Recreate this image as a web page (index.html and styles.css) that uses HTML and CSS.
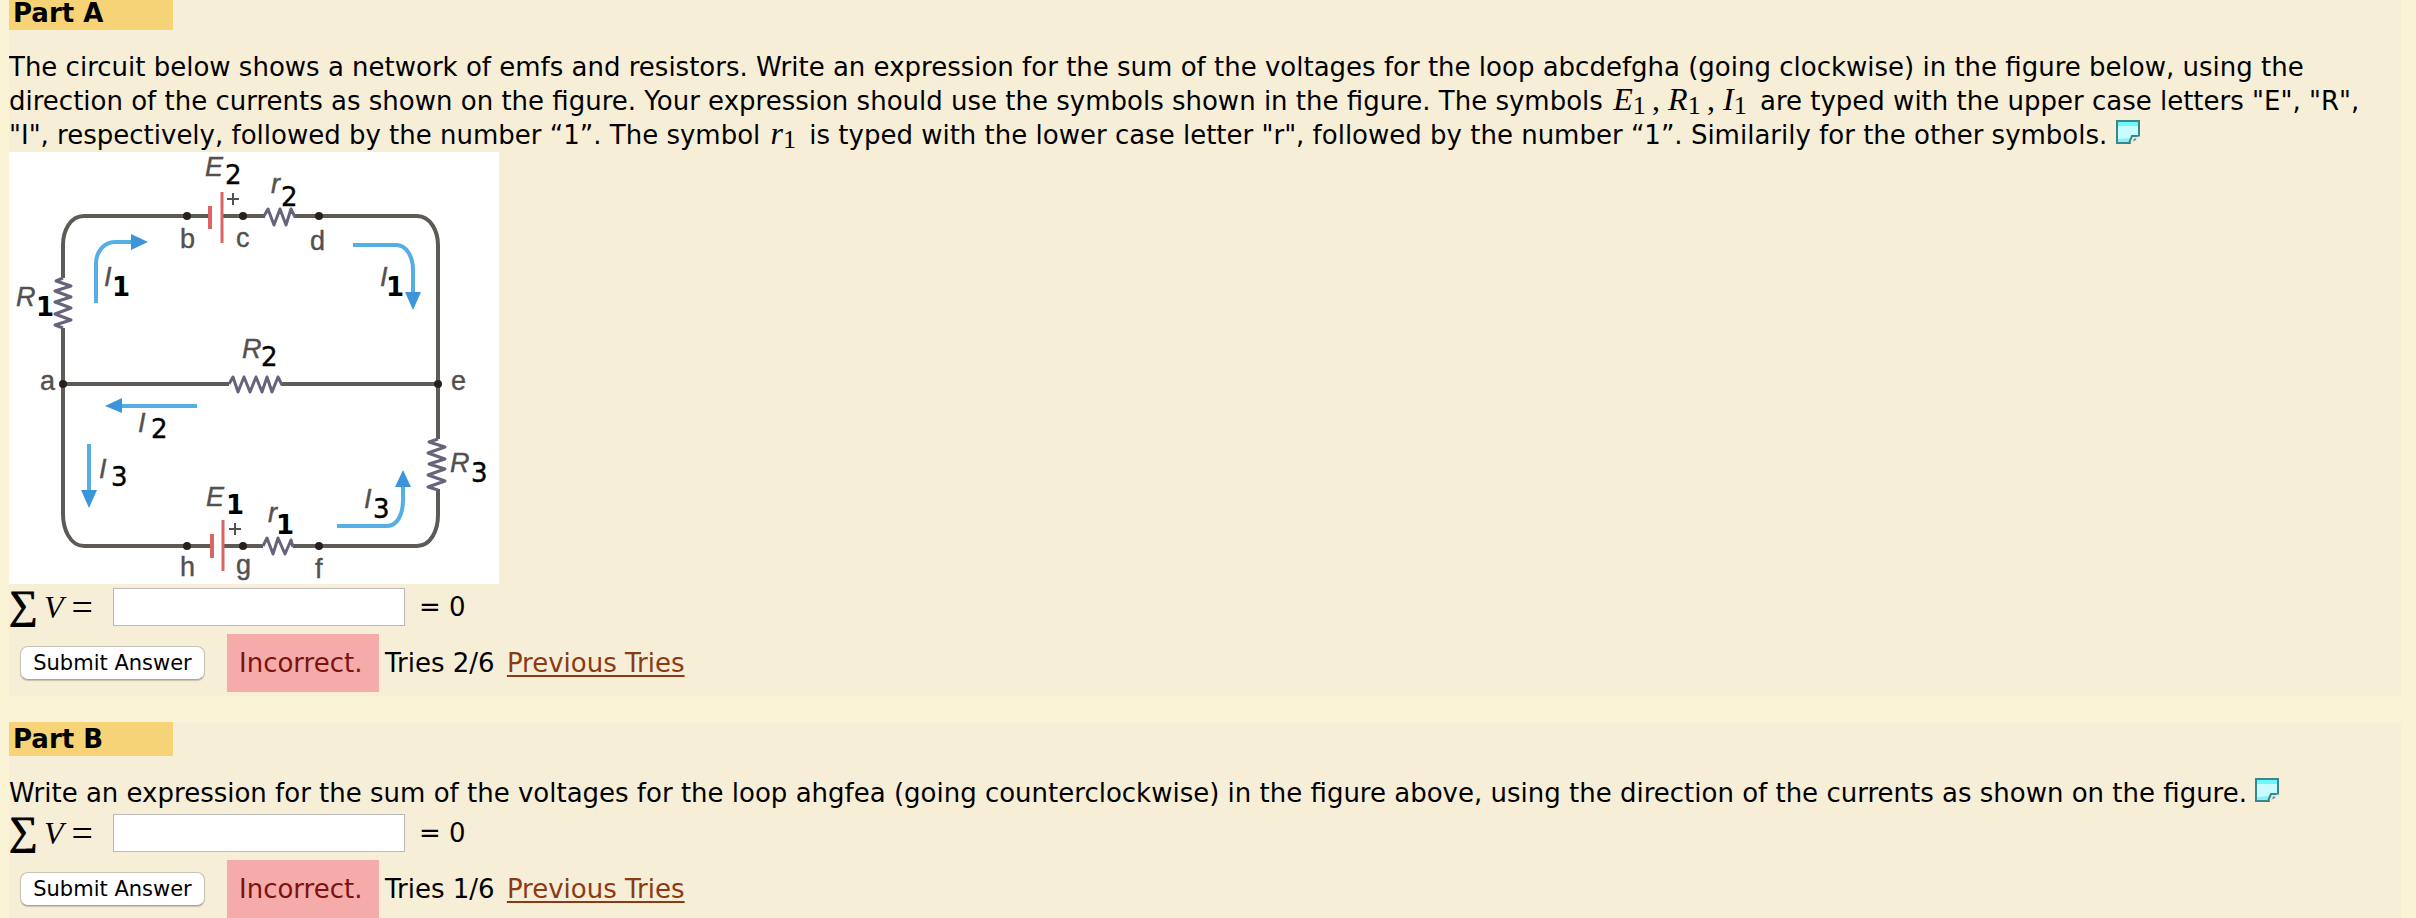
FILE: index.html
```html
<!DOCTYPE html>
<html lang="en">
<head>
<meta charset="utf-8">
<title>Circuit loops</title>
<link rel="stylesheet" href="styles.css">
</head>
<body>
<svg class="defs" aria-hidden="true">
  <symbol id="note" viewBox="0 0 24 24">
    <path d="M1 1H23V16H18L16 18L12 23H1Z" fill="#c9fcff"/>
    <path d="M2 2H22V6H2Z" fill="#70f6fa"/>
    <path d="M2 19L14 18L12 23H2Z" fill="#8df2f6"/>
    <path d="M12 23H1V1H23V16H16L13 23" fill="none" stroke="#35898c" stroke-width="2"/>
    <path d="M14 23L17 18L24 16L20 21Z" fill="#d9e6e1"/>
    <path d="M11 24L14 21L15 24ZM17 21L19 18L20 20Z" fill="#526d6d"/>
  </symbol>
</svg>
<main class="page">
  <section class="part">
    <h2 class="part-title">Part A</h2>
    <p class="question">The circuit below shows a network of emfs and resistors. Write an expression for the sum of the voltages for the loop abcdefgha (going clockwise) in the figure below, using the direction of the currents as shown on the figure. Your expression should use the symbols shown in the figure. The symbols <span class="math"><i>E</i><sub>1</sub>&#8201;, <i>R</i><sub>1</sub>&#8201;, <i>I</i><sub>1</sub></span> are typed with the upper case letters "E", "R", "I", respectively, followed by the number “1”. The symbol <span class="math"><i>r</i><sub>1</sub></span> is typed with the lower case letter "r", followed by the number “1”. Similarily for the other symbols. <svg class="note"><use href="#note"/></svg></p>
    <svg class="circuit" viewBox="9 152 490 432" role="img" aria-label="Circuit with three branches">
      <g class="wire">
        <path d="M63 278V245C63 231 70 216 84 216H210M222 216H265M294 216H417C431 216 438 232 438 245V439M438 489V515C438 530 431 546 417 546H293M263 546H223M212 546H84C70 546 63 529 63 514V328"/>
        <path d="M63 384H229M281 384H438"/>
      </g>
      <g class="zigzag">
        <path d="M63 278L56 281L71 286L55 291L71 297L55 302L71 308L55 314L71 320L55 325L63 328"/>
        <path d="M438 439L429 442L445 447L428 453L445 459L429 464L445 469L428 475L445 481L428 487L438 490"/>
        <path d="M264 216L268 209L274 225L280 209L286 225L291 209L295 217"/>
        <path d="M263 546L267 538L273 554L278 538L285 554L291 540L293 547"/>
        <path d="M229 384L233 377L238 392L244 377L250 392L256 377L262 392L267 377L272 392L278 377L282 385"/>
      </g>
      <g class="battery">
        <path d="M210 206V229M212 534V558" stroke-width="4"/>
        <path d="M222 192V243M223 520V571" stroke-width="3"/>
      </g>
      <path class="plus" d="M227 199H239M233 193V205M229 529H241M235 523V535"/>
      <g class="dots">
        <circle cx="187" cy="216" r="4"/><circle cx="243" cy="216" r="4"/><circle cx="319" cy="216" r="4"/>
        <circle cx="63" cy="384" r="4"/><circle cx="438" cy="384" r="4"/>
        <circle cx="187" cy="546" r="4"/><circle cx="243" cy="546" r="4"/><circle cx="319" cy="546" r="4"/>
      </g>
      <path class="current" d="M96 303V263C96 252 104 242 115 242H133M353 245H396C406 245 413 256 413 270V294M197 406H120M89 444V492M337 526H387C397 526 403 515 403 500V486"/>
      <path class="heads" d="M131 234L148 242L131 250ZM405 292H421L413 310ZM122 398L105 406L122 413ZM81 490H97L89 508ZM395 487H411L403 470Z"/>
      <g class="names">
        <text x="205" y="176">E</text><text x="271" y="193">r</text><text x="104" y="286">I</text>
        <text x="16" y="306">R</text><text x="242" y="358">R</text><text x="380" y="286">I</text>
        <text x="138" y="432">I</text><text x="99" y="478">I</text><text x="206" y="506">E</text>
        <text x="268" y="522">r</text><text x="364" y="508">I</text><text x="450" y="472">R</text>
      </g>
      <g class="points">
        <text x="180" y="248">b</text><text x="236" y="247">c</text><text x="310" y="250">d</text>
        <text x="40" y="390">a</text><text x="451" y="390">e</text><text x="180" y="576">h</text>
        <text x="236" y="574">g</text><text x="315" y="578">f</text>
      </g>
      <g class="digits">
        <text x="225" y="184">2</text><text x="281" y="206">2</text><text x="261" y="366">2</text><text x="151" y="438">2</text>
        <text x="111" y="486">3</text><text x="373" y="518">3</text><text x="471" y="482">3</text>
      </g>
      <g class="digits ones">
        <text x="112" y="296">1</text><text x="36" y="316">1</text><text x="386" y="296">1</text>
        <text x="226" y="514">1</text><text x="276" y="534">1</text>
      </g>
    </svg>
    <div class="answer">
      <label class="sum" for="answer-a"><span class="sigma">∑</span><i>V</i><span class="equals">=</span></label>
      <input class="field" id="answer-a" type="text">
      <span>= 0</span>
    </div>
    <div class="result">
      <button class="submit" type="button">Submit Answer</button>
      <span class="status">Incorrect.</span>
      <span class="tries">Tries 2/6 <a href="#previous-a">Previous Tries</a></span>
    </div>
  </section>
  <section class="part">
    <h2 class="part-title">Part B</h2>
    <p class="question">Write an expression for the sum of the voltages for the loop ahgfea (going counterclockwise) in the figure above, using the direction of the currents as shown on the figure. <svg class="note"><use href="#note"/></svg></p>
    <div class="answer">
      <label class="sum" for="answer-b"><span class="sigma">∑</span><i>V</i><span class="equals">=</span></label>
      <input class="field" id="answer-b" type="text">
      <span>= 0</span>
    </div>
    <div class="result">
      <button class="submit" type="button">Submit Answer</button>
      <span class="status">Incorrect.</span>
      <span class="tries">Tries 1/6 <a href="#previous-b">Previous Tries</a></span>
    </div>
  </section>
</main>
</body>
</html>
```
FILE: styles.css
```css
* { box-sizing: border-box; }
html { background: #fbf3d6; overflow: hidden; }
body {
  margin: -4px 15px 0 9px;
  color: #000;
  font: 26px/34px Verdana, "DejaVu Sans", sans-serif;
}
.defs { display: none; }
.page { display: flex; flex-direction: column; gap: 26px; }
.part { background: #f7eed8; padding-bottom: 4px; }
.part-title {
  width: 164px;
  margin: 0 0 20px;
  padding-left: 4px;
  background: #f6d376;
  font-size: 26px;
  line-height: 34px;
}
.question { margin: 0; padding-right: 12px; }
.math { margin: 0 5px 0 2px; font-family: "Liberation Serif", serif; font-size: 32px; line-height: 0; }
.math sub { font-size: 26px; line-height: 0; vertical-align: -4px; }
.note { width: 24px; height: 24px; vertical-align: baseline; }
.circuit { display: block; width: 490px; height: auto; background: #fff; }
.wire { fill: none; stroke: #5e5a55; stroke-width: 4; }
.zigzag { fill: none; stroke: #66647a; stroke-width: 3; stroke-linejoin: round; }
.battery { stroke: #dc6464; }
.plus { stroke: #55504b; stroke-width: 2; }
.dots { fill: #26211f; }
.current { fill: none; stroke: #55aee4; stroke-width: 4; }
.heads { fill: #3c94da; }
.names, .points { font: 27px "Liberation Sans", Arial, sans-serif; fill: #55504d; stroke: #55504d; stroke-width: 0.4; }
.names { font-style: italic; }
.digits { font: 26px "DejaVu Sans", sans-serif; stroke: #000; stroke-width: 0.4; }
.ones { font-weight: bold; stroke: none; }
.answer { display: flex; align-items: center; height: 46px; }
.sum {
  display: flex;
  align-items: center;
  gap: 8px;
  width: 104px;
  font: 32px/34px "Liberation Serif", serif;
}
.sigma { width: 27px; font-size: 40px; line-height: 30px; padding-bottom: 4px; -webkit-text-stroke: 1px #000; }
.equals { font-size: 38px; }
.field {
  width: 292px;
  height: 38px;
  margin-right: 14px;
  padding: 0 6px;
  border: 1px solid #b9b9b9;
  background: #fff;
  font: inherit;
}
.result { display: flex; align-items: center; margin-top: 4px; padding-left: 11px; }
.submit {
  width: 185px;
  height: 34px;
  margin-right: 22px;
  padding: 0;
  border: 1px solid #c9c4b8;
  border-bottom-color: #aaa59b;
  border-radius: 8px;
  background: #fff;
  box-shadow: 0 1px 1px #c9c2b0;
  color: #000;
  font: 21px/30px Verdana, "DejaVu Sans", sans-serif;
}
.status { min-width: 152px; padding: 12px; background: #f4abaa; color: #7c120e; }
.tries { margin-left: 6px; }
.tries a { margin-left: 4px; color: #8b3a16; text-decoration-thickness: 2px; text-underline-offset: 3px; }
```
